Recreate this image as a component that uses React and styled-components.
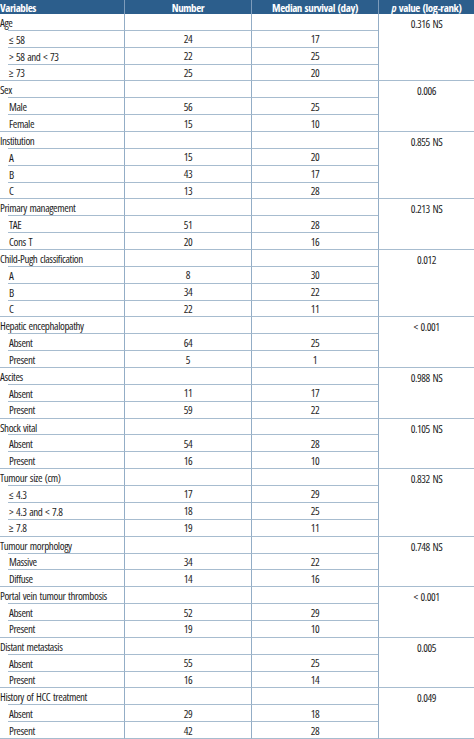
import React from "react";
import styled, { createGlobalStyle } from "styled-components";

const Global = createGlobalStyle`
  html, body { margin: 0; padding: 0; background: #ffffff; }
  body { font-family: "Open Sans", "Liberation Sans", sans-serif; font-stretch: 75%; }
`;

const LINE = "#a7bccf";
const VLINE = "#93adc6";

const groups = [
  { name: "Age", p: "0.316 NS", rows: [["≤ 58", 24, 17], ["> 58 and < 73", 22, 25], ["≥ 73", 25, 20]] },
  { name: "Sex", p: "0.006", rows: [["Male", 56, 25], ["Female", 15, 10]] },
  { name: "Institution", p: "0.855 NS", rows: [["A", 15, 20], ["B", 43, 17], ["C", 13, 28]] },
  { name: "Primary management", p: "0.213 NS", rows: [["TAE", 51, 28], ["Cons T", 20, 16]] },
  { name: "Child-Pugh classification", p: "0.012", rows: [["A", 8, 30], ["B", 34, 22], ["C", 22, 11]] },
  { name: "Hepatic encephalopathy", p: "< 0.001", rows: [["Absent", 64, 25], ["Present", 5, 1]] },
  { name: "Ascites", p: "0.988 NS", rows: [["Absent", 11, 17], ["Present", 59, 22]] },
  { name: "Shock vital", p: "0.105 NS", rows: [["Absent", 54, 28], ["Present", 16, 10]] },
  { name: "Tumour size (cm)", p: "0.832 NS", rows: [["≤ 4.3", 17, 29], ["> 4.3 and < 7.8", 18, 25], ["≥ 7.8", 19, 11]] },
  { name: "Tumour morphology", p: "0.748 NS", rows: [["Massive", 34, 22], ["Diffuse", 14, 16]] },
  { name: "Portal vein tumour thrombosis", p: "< 0.001", rows: [["Absent", 52, 29], ["Present", 19, 10]] },
  { name: "Distant metastasis", p: "0.005", rows: [["Absent", 55, 25], ["Present", 16, 14]] },
  { name: "History of HCC treatment", p: "0.049", rows: [["Absent", 29, 18], ["Present", 42, 28]] },
];

const Table = styled.div`
  display: grid;
  grid-template-columns: 124px 127px 127px 96px;
  grid-template-rows: 14px repeat(43, 16.86px);
  width: 474px;
  color: #1e1e1e;
  font-size: 11px;
  font-weight: 500;
  letter-spacing: -0.4px;
  word-spacing: 1px;
  line-height: 1;
`;

const Head = styled.div`
  background: #2c5e8c;
  color: #ffffff;
  font-weight: 700;
  display: flex;
  align-items: center;
  justify-content: ${(p) => (p.$left ? "flex-start" : "center")};
  border-left: ${(p) => (p.$left ? "none" : "1px solid #7e9cbb")};
  white-space: nowrap;
  overflow: hidden;
`;

const Label = styled.div`
  display: flex;
  align-items: center;
  white-space: nowrap;
  padding-left: ${(p) => (p.$sub ? "9px" : "0")};
  border-bottom: ${(p) => (p.$full ? `1px solid ${LINE}` : "none")};
  background: ${(p) =>
    p.$full ? "none" : `linear-gradient(${LINE}, ${LINE}) no-repeat 8px 100% / calc(100% - 8px) 1px`};
`;

const Num = styled.div`
  display: flex;
  align-items: center;
  justify-content: center;
  border-left: 1px solid ${VLINE};
  border-bottom: 1px solid ${LINE};
`;

const PCell = styled.div`
  grid-row: span ${(p) => p.$span};
  display: flex;
  justify-content: center;
  padding-top: 4px;
  border-left: 1px solid ${VLINE};
  border-bottom: 1px solid ${LINE};
  white-space: nowrap;
`;

export default function App() {
  return (
    <>
      <Global />
      <Table>
        <Head $left>Variables</Head>
        <Head>Number</Head>
        <Head>Median survival (day)</Head>
        <Head>
          <i>p</i>&nbsp;value (log-rank)
        </Head>
        {groups.map((g) => (
          <React.Fragment key={g.name}>
            <Label>{g.name}</Label>
            <Num />
            <Num />
            <PCell $span={g.rows.length + 1}>{g.p}</PCell>
            {g.rows.map((r, i) => (
              <React.Fragment key={i}>
                <Label $sub $full={i === g.rows.length - 1}>{r[0]}</Label>
                <Num>{r[1]}</Num>
                <Num>{r[2]}</Num>
              </React.Fragment>
            ))}
          </React.Fragment>
        ))}
      </Table>
    </>
  );
}
